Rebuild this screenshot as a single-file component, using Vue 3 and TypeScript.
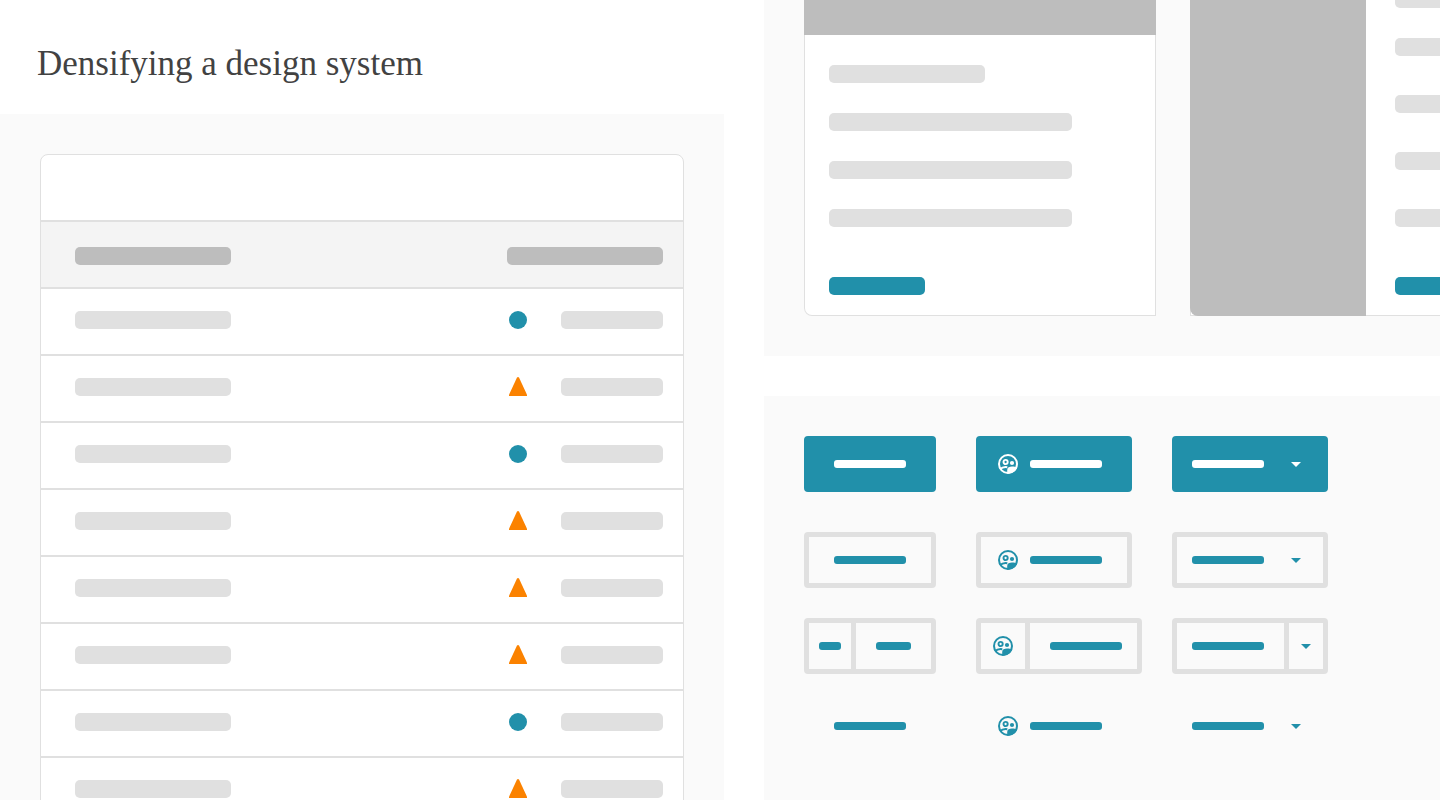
<script setup lang="ts">
type Status = 'ok' | 'warning'
type Row = { id: number; status: Status }

const statuses: Status[] = ['ok', 'warning', 'ok', 'warning', 'warning', 'warning', 'ok', 'warning', 'ok']
const rows: Row[] = statuses.map((status, id) => ({ id, status }))
const rowOrder = ['filled', 'outlined', 'split', 'text'] as const
</script>

<template>
  <main class="page">
    <svg class="sprite" aria-hidden="true">
      <symbol id="people" viewBox="0 0 24 24">
        <circle cx="12" cy="12" r="9" fill="none" stroke="currentColor" stroke-width="2" />
        <circle cx="9.6" cy="10" r="2.1" fill="none" stroke="currentColor" stroke-width="1.9" />
        <circle cx="16" cy="11" r="2.1" fill="currentColor" />
        <path d="M4 17.300C5.600 15.700 7.900 15 9.600 15c.5 0 1 .05 1.700.2" fill="none" stroke="currentColor" stroke-width="2" />
        <path d="M11.200 21.500v-3.600c0-2.300 2.300-3.300 4.800-3.300 1.900 0 3.800.3 5.200.9-1.300 3.700-4.900 6.200-10 6z" fill="currentColor" />
      </symbol>
      <symbol id="caret" viewBox="0 0 24 24">
        <path d="M7 10l5 5 5-5z" fill="currentColor" />
      </symbol>
    </svg>

    <section class="column">
      <header class="header">
        <h1 class="title">Densifying a design system</h1>
      </header>
      <div class="panel table-panel">
        <div class="table-card">
          <div class="toolbar"></div>
          <table class="table">
            <colgroup>
              <col />
              <col class="col-status" />
              <col class="col-value" />
            </colgroup>
            <thead>
              <tr>
                <th class="cell-name"><span class="bar medium dark"></span></th>
                <th colspan="2"><span class="bar medium dark"></span></th>
              </tr>
            </thead>
            <tbody>
              <tr v-for="row in rows" :key="row.id">
                <td class="cell-name"><span class="bar medium"></span></td>
                <td class="cell-status">
                  <svg v-if="row.status === 'ok'" class="status" viewBox="0 0 18 18" role="img" aria-label="OK">
                    <circle cx="9" cy="9" r="9" fill="#2190aa" />
                  </svg>
                  <svg v-else class="status" viewBox="0 0 18 18" role="img" aria-label="Warning">
                    <path d="M0 18v-1.200L8 -.4Q9-1.600 10-.4L18 16.800V18z" fill="#fb8200" />
                  </svg>
                </td>
                <td><span class="bar short"></span></td>
              </tr>
            </tbody>
          </table>
        </div>
      </div>
    </section>

    <section class="column">
      <div class="panel cards">
        <article class="card vertical">
          <div class="media-top"></div>
          <div class="card-body">
            <span class="bar medium"></span>
            <span class="bar long"></span>
            <span class="bar long"></span>
            <span class="bar long"></span>
            <button class="action" type="button" aria-label="Open"></button>
          </div>
        </article>
        <article class="card horizontal">
          <div class="media-side"></div>
          <div class="card-body">
            <span class="bar medium lead"></span>
            <span class="bar long"></span>
            <span class="bar long"></span>
            <span class="bar long"></span>
            <span class="bar long"></span>
            <button class="action" type="button" aria-label="Open"></button>
          </div>
        </article>
      </div>

      <div class="panel buttons">
        <div v-for="kind in rowOrder" :key="kind" class="button-row" :class="'row-' + kind">
          <template v-if="kind !== 'split'">
            <button class="button plain" :class="kind" type="button" aria-label="Action">
              <span class="label"></span>
            </button>
            <button class="button leading" :class="kind" type="button" aria-label="Team action">
              <svg class="icon"><use href="#people" /></svg>
              <span class="label"></span>
            </button>
            <button class="button trailing" :class="kind" type="button" aria-label="Menu">
              <span class="label"></span>
              <svg class="icon"><use href="#caret" /></svg>
            </button>
          </template>
          <template v-else>
            <div class="split">
              <button class="segment tight" type="button" aria-label="First"><span class="label tiny"></span></button>
              <button class="segment wide" type="button" aria-label="Second"><span class="label small"></span></button>
            </div>
            <div class="split">
              <button class="segment tight" type="button" aria-label="Team"><svg class="icon"><use href="#people" /></svg></button>
              <button class="segment after" type="button" aria-label="Action"><span class="label"></span></button>
            </div>
            <div class="split">
              <button class="segment before" type="button" aria-label="Action"><span class="label"></span></button>
              <button class="segment snug" type="button" aria-label="Menu"><svg class="icon"><use href="#caret" /></svg></button>
            </div>
          </template>
        </div>
      </div>
    </section>
  </main>
</template>

<style>
html,
body {
  background: #fff;
}
</style>

<style scoped>
.page {
  display: grid;
  grid-template-columns: minmax(0, 724fr) minmax(0, 676fr);
  grid-template-rows: minmax(0, 1fr);
  gap: 40px;
  height: 100vh;
  overflow: hidden;
  font-family: "Liberation Serif", serif;
}
.page * {
  box-sizing: border-box;
}
.sprite {
  display: none;
}
.column {
  display: flex;
  flex-direction: column;
  min-width: 0;
  min-height: 0;
}
.header {
  flex: none;
  padding: 44px 37px 30px;
}
.title {
  margin: 0;
  font-size: 35px;
  line-height: 40px;
  font-weight: 400;
  color: #424242;
  white-space: nowrap;
}
.panel {
  background: #fafafa;
  overflow: hidden;
}
.table-panel {
  flex: 1;
  min-height: 0;
  padding: 40px 40px 0;
}
.table-card {
  overflow: hidden;
  background: #fff;
  border: 1px solid #e0e0e0;
  border-radius: 8px;
}
.toolbar {
  height: 65px;
}
.table {
  width: 100%;
  table-layout: fixed;
  border-collapse: separate;
  border-spacing: 0;
}
.col-status {
  width: 54px;
}
.col-value {
  width: 122px;
}
.table th,
.table td {
  height: 67px;
  padding: 22px 0 0;
  border-top: 2px solid #e0e0e0;
  vertical-align: top;
}
.table th {
  padding-top: 25px;
  background: #f4f4f4;
}
.table .cell-name {
  padding-left: 34px;
}
.table .cell-status {
  padding-left: 2px;
}
.status {
  display: block;
  width: 18px;
  height: 18px;
  overflow: visible;
}
.bar {
  display: block;
  flex: none;
  height: 18px;
  border-radius: 5px;
  background: #e0e0e0;
}
.medium {
  width: 156px;
}
.short {
  width: 102px;
}
.long {
  width: 243px;
}
.dark {
  background: #bdbdbd;
}
.cards {
  display: flex;
  flex: none;
  align-items: flex-end;
  gap: 34px;
  padding: 0 0 40px 40px;
  height: 356px;
}
.card {
  display: flex;
  flex: none;
  background: #fff;
}
.vertical {
  flex-direction: column;
  width: 352px;
  border-bottom-left-radius: 8px;
}
.media-top {
  height: 35px;
  background: #bdbdbd;
}
.vertical .card-body {
  padding: 30px 24px 20px;
  border: 1px solid #e0e0e0;
  border-top: 0;
  border-bottom-left-radius: 8px;
  background: #fff;
}
.card-body {
  display: flex;
  flex-direction: column;
  gap: 30px;
}
.action {
  width: 96px;
  height: 18px;
  margin: 20px 0 0;
  padding: 0;
  border: 0;
  border-radius: 5px;
  background: #2190aa;
}
.horizontal {
  border: 1px solid #e0e0e0;
}
.media-side {
  width: 176px;
  margin: 0 0 -1px -1px;
  border-bottom-left-radius: 8px;
  background: #bdbdbd;
}
.horizontal .card-body {
  gap: 39px;
  padding: 0 29px 20px;
}
.horizontal .lead {
  margin-bottom: -9px;
}
.horizontal .action {
  margin-top: 11px;
}
.buttons {
  flex: 1;
  min-height: 0;
  margin-top: 40px;
  padding: 40px;
}
.button-row {
  display: grid;
  grid-template-columns: 132px 156px 156px;
  justify-items: start;
  gap: 40px;
}
.row-outlined {
  margin-top: 40px;
}
.row-split {
  margin-top: 30px;
}
.row-text {
  margin-top: 24px;
}
.button {
  display: flex;
  align-items: center;
  width: 100%;
  height: 56px;
  margin: 0;
  padding: 0;
  border: 5px solid transparent;
  border-radius: 4px;
  background: transparent;
  color: #2190aa;
}
.filled {
  border-color: #2190aa;
  background: #2190aa;
  color: #fff;
}
.outlined {
  border-color: #e0e0e0;
}
.plain {
  justify-content: center;
}
.leading {
  gap: 10px;
  padding-left: 15px;
}
.trailing {
  gap: 20px;
  padding-left: 15px;
}
.icon {
  display: block;
  flex: none;
  width: 24px;
  height: 24px;
}
.label {
  display: block;
  flex: none;
  width: 72px;
  height: 8px;
  border-radius: 3px;
  background: currentColor;
}
.tiny {
  width: 22px;
}
.small {
  width: 35px;
}
.split {
  display: flex;
  height: 56px;
  border: 5px solid #e0e0e0;
  border-radius: 4px;
}
.segment {
  display: flex;
  align-items: center;
  margin: 0;
  border: 0;
  background: transparent;
  color: #2190aa;
}
.segment + .segment {
  border-left: 5px solid #e0e0e0;
}
.tight {
  padding: 0 10px;
}
.wide {
  padding: 0 20px;
}
.after {
  padding: 0 15px 0 20px;
}
.before {
  padding: 0 20px 0 15px;
}
.snug {
  padding: 0 5px;
}
</style>
